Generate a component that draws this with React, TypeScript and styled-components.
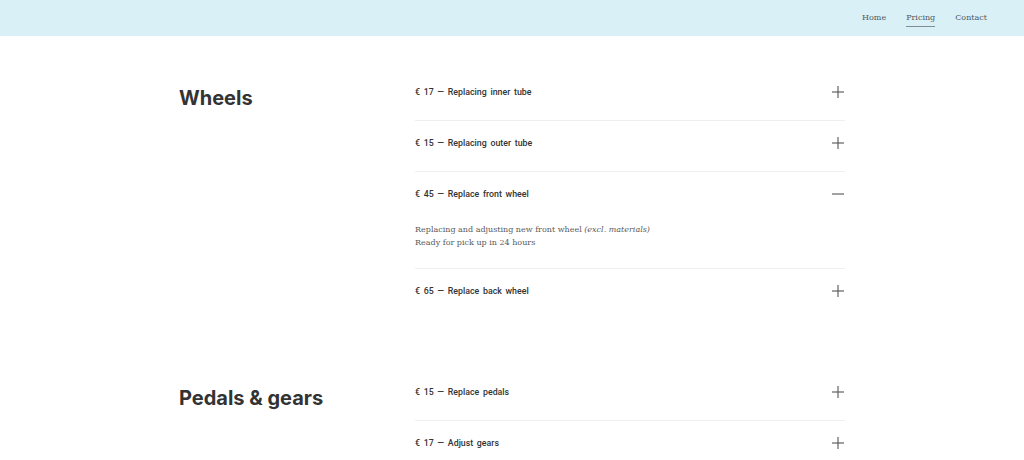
import React from "react";
import styled, { createGlobalStyle } from "styled-components";

const Global = createGlobalStyle`
  html, body { margin: 0; padding: 0; background: #fff; }
  body { font-family: "Roboto", "Liberation Sans", sans-serif; color: #333; }
  * { box-sizing: border-box; }
`;

const Header = styled.header`
  height: 36px;
  background: #d9f0f7;
  display: flex;
  justify-content: flex-end;
  align-items: center;
  padding-right: 37px;
`;

const Nav = styled.nav`
  display: flex;
  gap: 20px;
  align-items: center;
`;

const NavLink = styled.a<{ $active?: boolean }>`
  font-family: "DejaVu Serif", "Liberation Serif", serif;
  font-size: 8px;
  line-height: 12px;
  color: #50585c;
  text-decoration: none;
  padding-top: 1px;
  padding-bottom: 2px;
  border-bottom: 1.5px solid ${(p) => (p.$active ? "#7f8e95" : "transparent")};
  margin-top: 1px;
`;

const Main = styled.main`
  padding-top: 34px;
  display: flex;
  flex-direction: column;
  gap: 50px;
`;

const Section = styled.section`
  width: 666px;
  margin: 0 auto;
  display: grid;
  grid-template-columns: 236px 1fr;
`;

const Title = styled.h2`
  margin: 0;
  padding-top: 16px;
  font-family: "Inter", "Roboto", sans-serif;
  font-weight: 700;
  font-size: 20px;
  line-height: 24px;
  color: #333;
`;

const List = styled.div`
  display: flex;
  flex-direction: column;
`;

const Item = styled.div<{ $last?: boolean }>`
  border-bottom: 1px solid ${(p) => (p.$last ? "transparent" : "#efefef")};
`;

const ItemHead = styled.div`
  display: flex;
  align-items: center;
  justify-content: space-between;
  padding: 16px 1px 22px 0;
  height: 50px;
`;

const ItemLabel = styled.span`
  font-family: "Roboto", "Liberation Sans", sans-serif;
  font-weight: 500;
  font-size: 8.8px;
  line-height: 12px;
  color: #333;
  white-space: pre;
  word-spacing: 1.5px;
`;

const Panel = styled.div`
  padding: 1px 0 19px;
  font-family: "DejaVu Serif", "Liberation Serif", serif;
  font-size: 8px;
  line-height: 13px;
  color: #5a5a5a;
  em { font-style: italic; }
`;

const Icon = styled.svg`
  width: 12px;
  height: 12px;
  display: block;
`;

const Toggle = ({ open }: { open: boolean }) => (
  <Icon viewBox="0 0 12 12">
    <path d="M0 6H12" stroke="#555" strokeWidth="1.1" />
    {!open && <path d="M6 0V12" stroke="#555" strokeWidth="1.1" />}
  </Icon>
);

type Entry = { price: number; name: string; open?: boolean; body?: React.ReactNode };

const sections: { title: string; items: Entry[] }[] = [
  {
    title: "Wheels",
    items: [
      { price: 17, name: "Replacing inner tube" },
      { price: 15, name: "Replacing outer tube" },
      {
        price: 45,
        name: "Replace front wheel",
        open: true,
        body: (
          <>
            Replacing and adjusting new front wheel <em>(excl. materials)</em>
            <br />
            Ready for pick up in 24 hours
          </>
        ),
      },
      { price: 65, name: "Replace back wheel" },
    ],
  },
  {
    title: "Pedals & gears",
    items: [
      { price: 15, name: "Replace pedals" },
      { price: 17, name: "Adjust gears" },
    ],
  },
];

export default function App() {
  return (
    <>
      <Global />
      <Header>
        <Nav>
          <NavLink>Home</NavLink>
          <NavLink $active>Pricing</NavLink>
          <NavLink>Contact</NavLink>
        </Nav>
      </Header>
      <Main>
        {sections.map((s) => (
          <Section key={s.title}>
            <Title>{s.title}</Title>
            <List>
              {s.items.map((it, i) => (
                <Item key={it.name} $last={i === s.items.length - 1}>
                  <ItemHead>
                    <ItemLabel>{`€ ${it.price} — ${it.name}`}</ItemLabel>
                    <Toggle open={!!it.open} />
                  </ItemHead>
                  {it.open && <Panel>{it.body}</Panel>}
                </Item>
              ))}
            </List>
          </Section>
        ))}
      </Main>
    </>
  );
}
